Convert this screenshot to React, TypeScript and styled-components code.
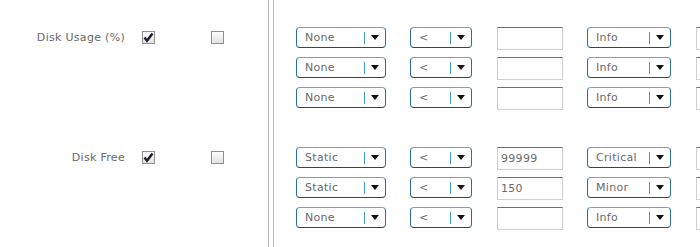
import React, { ReactElement } from "react";
import styled, { createGlobalStyle } from "styled-components";

const GlobalStyle = createGlobalStyle`
    html, body {
        margin: 0;
        padding: 0;
        background: #ffffff;
        font-family: "DejaVu Sans", Verdana, sans-serif;
        font-size: 11px;
        letter-spacing: 0.3px;
        color: #6a6a6a;
    }
`;

const Page = styled.div`
    display: flex;
    width: 700px;
    height: 247px;
    overflow: hidden;
`;

const LeftColumn = styled.div`
    width: 268px;
    flex-shrink: 0;
    padding-top: 27px;
    box-sizing: border-box;
`;

const Divider = styled.div`
    width: 6px;
    flex-shrink: 0;
    box-sizing: border-box;
    border-left: 1px solid #b9b9b9;
    border-right: 1px solid #b9b9b9;
`;

const RightColumn = styled.div`
    flex: 1;
    padding: 27px 0 0 22px;
    box-sizing: border-box;
    overflow: hidden;
`;

const MetricRow = styled.div`
    display: flex;
    align-items: center;
    height: 20px;
    margin-bottom: 100px;
`;

const Label = styled.div`
    width: 125px;
    text-align: right;
    color: #6a6a6a;
    white-space: nowrap;
`;

const Check = styled.div<{ $left: number }>`
    width: 13px;
    height: 13px;
    margin-left: ${(p) => p.$left}px;
    box-sizing: border-box;
    border: 1px solid #8f8f8f;
    background: linear-gradient(#fdfdfd, #e3e3e3);
    display: flex;
    align-items: center;
    justify-content: center;
`;

const Group = styled.div`
    margin-bottom: 30px;
`;

const Row = styled.div`
    display: flex;
    align-items: flex-start;
    height: 30px;
    gap: 24px;
    white-space: nowrap;
`;

const SelectBox = styled.div<{ $width: number }>`
    width: ${(p) => p.$width}px;
    height: 21px;
    flex-shrink: 0;
    box-sizing: border-box;
    border: 1px solid;
    border-color: #5aaad8 #2b6e96 #1b4c6d #2b6e96;
    border-radius: 4px;
    display: flex;
    align-items: center;
    background: #fff;
`;

const SelectValue = styled.div`
    flex: 1;
    padding-left: 8px;
    color: #6a6a6a;
    overflow: hidden;
`;

const SelectArrow = styled.div`
    width: 20px;
    height: 12px;
    border-left: 1px solid #3b9bd0;
    display: flex;
    align-items: center;
    justify-content: center;
`;

const TextBox = styled.div`
    width: 66px;
    height: 23px;
    flex-shrink: 0;
    box-sizing: border-box;
    border: 1px solid #cfcfcf;
    border-top-color: #6e6e6e;
    padding: 0 3px;
    display: flex;
    align-items: center;
    color: #6a6a6a;
    margin-left: 1px;
`;

const CheckMark = (): ReactElement => (
    <svg width="11" height="11" viewBox="0 0 11 11">
        <path d="M1.5 5.5 L4 8.8 L9.5 1.5" fill="none" stroke="#1c1c2a" strokeWidth="2.4" />
    </svg>
);

const Arrow = (): ReactElement => (
    <svg width="8" height="5" viewBox="0 0 8 5">
        <path d="M0 0 H8 L4 5 Z" fill="#111" />
    </svg>
);

const Select: React.FC<{ value: string; width: number }> = ({ value, width }) => (
    <SelectBox $width={width}>
        <SelectValue>{value}</SelectValue>
        <SelectArrow>
            <Arrow />
        </SelectArrow>
    </SelectBox>
);

type Threshold = { source: string; value: string; severity: string };

const metrics: { label: string; rows: Threshold[] }[] = [
    {
        label: "Disk Usage (%)",
        rows: [
            { source: "None", value: "", severity: "Info" },
            { source: "None", value: "", severity: "Info" },
            { source: "None", value: "", severity: "Info" },
        ],
    },
    {
        label: "Disk Free",
        rows: [
            { source: "Static", value: "99999", severity: "Critical" },
            { source: "Static", value: "150", severity: "Minor" },
            { source: "None", value: "", severity: "Info" },
        ],
    },
];

const App: React.FC = (): ReactElement => (
    <>
        <GlobalStyle />
        <Page>
            <LeftColumn>
                {metrics.map((m) => (
                    <MetricRow key={m.label}>
                        <Label>{m.label}</Label>
                        <Check $left={17}>
                            <CheckMark />
                        </Check>
                        <Check $left={56} />
                    </MetricRow>
                ))}
            </LeftColumn>
            <Divider />
            <RightColumn>
                {metrics.map((m) => (
                    <Group key={m.label}>
                        {m.rows.map((r, i) => (
                            <Row key={i}>
                                <Select value={r.source} width={90} />
                                <Select value="<" width={62} />
                                <TextBox>{r.value}</TextBox>
                                <Select value={r.severity} width={84} />
                                <TextBox />
                            </Row>
                        ))}
                    </Group>
                ))}
            </RightColumn>
        </Page>
    </>
);

export default App;
